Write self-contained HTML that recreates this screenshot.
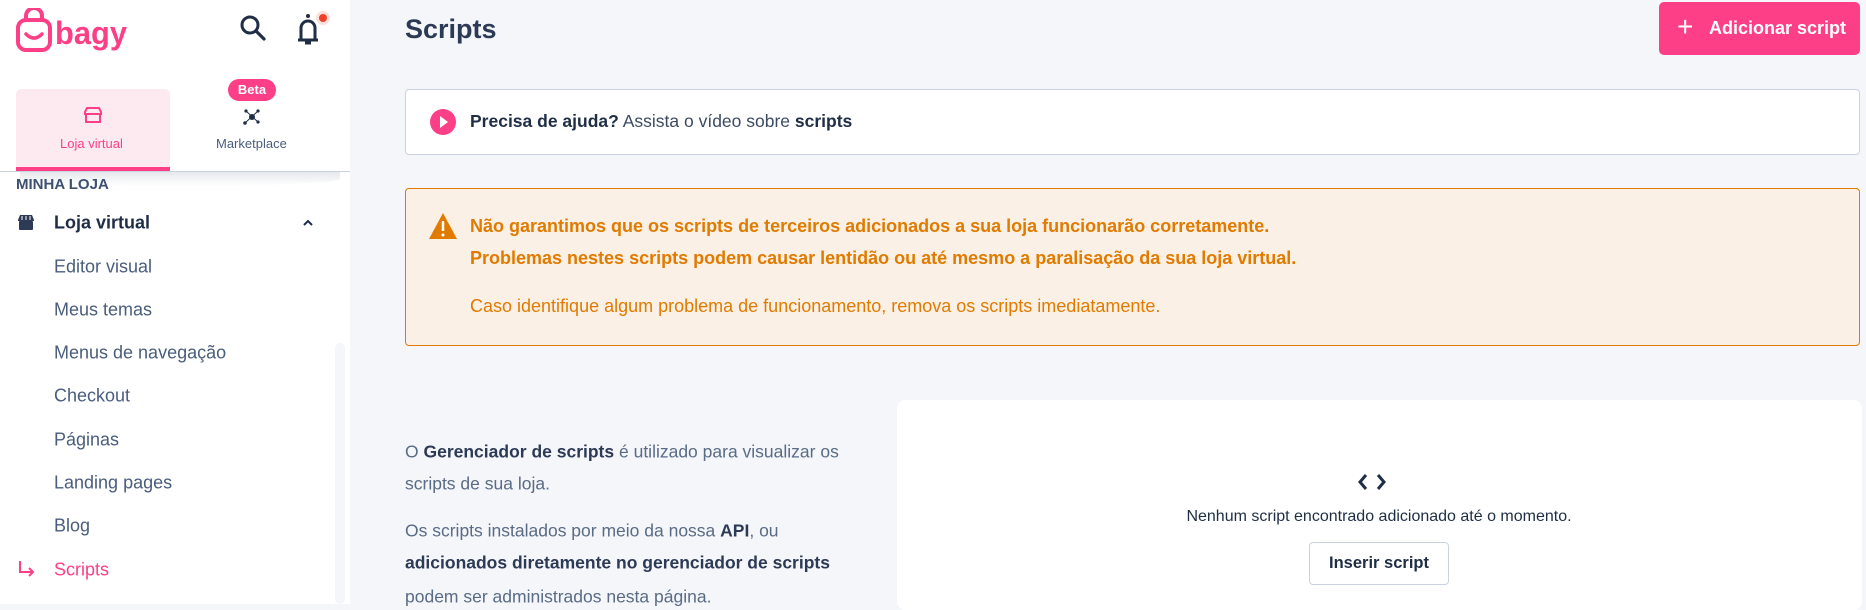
<!DOCTYPE html>
<html><head><meta charset="utf-8"><style>
*{margin:0;padding:0;box-sizing:border-box}
body{width:1866px;height:604px;overflow:hidden;background:#f4f6fa;font-family:"Liberation Sans",sans-serif;position:relative;color:#2d3a55}
.a{position:absolute;white-space:nowrap}
#side{position:absolute;left:0;top:0;width:350px;height:604px;background:#fff}
.item{position:absolute;left:54px;font-size:18px;color:#4a5d7c;transform:translateY(-50%)}
.lt{position:absolute;left:405px;font-size:17.5px;color:#5a6b85;transform:translateY(-50%);white-space:nowrap}
.lt b{color:#2d3a55;font-weight:600}
</style></head><body>
<div id="side">
  <svg class="a" style="left:16px;top:8px" width="115" height="46" viewBox="0 0 115 46">
    <rect x="2" y="12" width="32" height="30" rx="8" fill="none" stroke="#fc3f87" stroke-width="4"/>
    <path d="M10 12 V8 a8 8 0 0 1 16 0 V12" fill="none" stroke="#fc3f87" stroke-width="4"/>
    <path d="M10 26 q8 8 16 0" fill="none" stroke="#fc3f87" stroke-width="3.5" stroke-linecap="round"/>
    <text x="39" y="36" font-family="Liberation Sans" font-weight="bold" font-size="32" fill="#fc3f87" textLength="72" lengthAdjust="spacingAndGlyphs">bagy</text>
  </svg>
  <svg class="a" style="left:238px;top:13px" width="30" height="30" viewBox="0 0 30 30"><circle cx="12" cy="12" r="8" fill="none" stroke="#1f2d45" stroke-width="3"/><path d="M18 18 L26 26" stroke="#1f2d45" stroke-width="3.2" stroke-linecap="round"/></svg>
  <svg class="a" style="left:293px;top:10px" width="40" height="36" viewBox="0 0 40 36"><path d="M5 30 H25 M8 29 V18 a7 7 0 0 1 14 0 V29" fill="none" stroke="#1f2d45" stroke-width="3"/><path d="M12 33 h6" stroke="#1f2d45" stroke-width="3"/><circle cx="15" cy="6" r="2" fill="#1f2d45"/><circle cx="30" cy="8" r="7" fill="#fde0dc"/><circle cx="30" cy="8" r="4" fill="#f0412b"/></svg>
  <div class="a" style="left:16px;top:89px;width:154px;height:82px;background:#fdeaf1;border-radius:5px 5px 0 0;border-bottom:4px solid #fc3f87"></div>
  <svg class="a" style="left:83px;top:106px" width="20" height="18" viewBox="0 0 20 18"><path d="M2 6 L4 2 H16 L18 6 V8 H2 Z M3 8 V16 H17 V8" fill="none" stroke="#fc3f87" stroke-width="2"/></svg>
  <div class="a" style="left:60px;top:136px;font-size:13px;color:#fc3f87">Loja virtual</div>
  <div class="a" style="left:228px;top:79px;width:48px;height:22px;border-radius:11px;background:#fc3f87;color:#fff;font-size:13px;font-weight:bold;text-align:center;line-height:22px">Beta</div>
  <svg class="a" style="left:242px;top:107px" width="20" height="20" viewBox="0 0 20 20"><circle cx="10" cy="10" r="3" fill="#1f2d45"/><circle cx="4" cy="4" r="1.6" fill="#1f2d45"/><circle cx="16" cy="4" r="1.6" fill="#1f2d45"/><circle cx="3" cy="16" r="1.8" fill="#1f2d45"/><circle cx="16" cy="15" r="1.6" fill="#1f2d45"/><path d="M4 4L16 15M16 4L3 16" stroke="#1f2d45" stroke-width="1"/></svg>
  <div class="a" style="left:216px;top:136px;font-size:13px;color:#4a5d7c">Marketplace</div>
  <div class="a" style="left:0;top:171px;width:350px;height:1px;background:#c9d3e0"></div>
  <div class="a" style="left:20px;top:172px;width:320px;height:14px;background:linear-gradient(#e6e8ec,rgba(255,255,255,0));border-radius:0 0 50% 50%"></div>
  <div class="a" style="left:16px;top:176px;font-size:15px;font-weight:bold;color:#3d5070">MINHA LOJA</div>
  <svg class="a" style="left:17px;top:215px" width="18" height="15" viewBox="0 0 18 15"><path d="M1 5 L3 0 H15 L17 5 V6 H1 Z" fill="#2d3a55"/><rect x="2" y="6" width="14" height="9" rx="1" fill="#2d3a55"/><path d="M5 1v4M9 1v4M13 1v4" stroke="#fff" stroke-width="1"/></svg>
  <div class="item" style="top:223px;color:#1f2d45;font-weight:600">Loja virtual</div>
  <svg class="a" style="left:302px;top:219px" width="12" height="8" viewBox="0 0 12 8"><path d="M2 6 L6 2 L10 6" fill="none" stroke="#1f2d45" stroke-width="2"/></svg>
  <div class="item" style="top:267px">Editor visual</div>
  <div class="item" style="top:310px">Meus temas</div>
  <div class="item" style="top:353px">Menus de navegação</div>
  <div class="item" style="top:396px">Checkout</div>
  <div class="item" style="top:440px">Páginas</div>
  <div class="item" style="top:483px">Landing pages</div>
  <div class="item" style="top:526px">Blog</div>
  <svg class="a" style="left:18px;top:560px" width="18" height="18" viewBox="0 0 18 18"><path d="M2 1 V12 H15 M11 8 L15 12 L11 16" fill="none" stroke="#fc3f87" stroke-width="2"/></svg>
  <div class="item" style="top:570px;color:#fc3f87">Scripts</div>
  <div class="a" style="left:335px;top:343px;width:10px;height:261px;background:#f4f6fa;border-radius:5px"></div>
</div>

<div class="a" style="left:405px;top:14px;font-size:27px;font-weight:600;color:#2d3a55">Scripts</div>
<div class="a" style="left:1659px;top:2px;width:201px;height:53px;background:#fc3f87;border-radius:5px;color:#fff;font-size:18px;font-weight:bold;line-height:53px"><span style="font-size:28px;font-weight:normal;position:absolute;left:18px;top:-2px">+</span><span style="position:absolute;left:50px">Adicionar script</span></div>

<div class="a" style="left:405px;top:89px;width:1455px;height:66px;background:#fff;border:1px solid #c9d3e0;border-radius:4px"></div>
<svg class="a" style="left:429px;top:108px" width="28" height="28" viewBox="0 0 28 28"><circle cx="14" cy="14" r="13" fill="#fc3f87"/><path d="M11 8 L19 14 L11 20 Z" fill="#fff"/></svg>
<div class="a" style="left:470px;top:111px;font-size:17.5px;color:#3d4a63"><b style="color:#1f2d45;font-weight:600">Precisa de ajuda?</b> Assista o vídeo sobre <b style="color:#1f2d45;font-weight:600">scripts</b></div>

<div class="a" style="left:405px;top:188px;width:1455px;height:158px;background:#fbf0e6;border:1px solid #e07b00;border-radius:4px"></div>
<svg class="a" style="left:428px;top:212px" width="30" height="28" viewBox="0 0 30 28"><path d="M15 1 L29 27 H1 Z" fill="#e07b00"/><path d="M15 9 V19" stroke="#fff" stroke-width="2.5"/><circle cx="15" cy="23" r="1.5" fill="#fff"/></svg>
<div class="a" style="left:470px;top:216px;font-size:18px;font-weight:600;color:#e07b00">Não garantimos que os scripts de terceiros adicionados a sua loja funcionarão corretamente.</div>
<div class="a" style="left:470px;top:248px;font-size:18px;font-weight:600;color:#e07b00">Problemas nestes scripts podem causar lentidão ou até mesmo a paralisação da sua loja virtual.</div>
<div class="a" style="left:470px;top:296px;font-size:18px;color:#e07b00">Caso identifique algum problema de funcionamento, remova os scripts imediatamente.</div>

<div class="lt" style="top:452px">O <b>Gerenciador de scripts</b> é utilizado para visualizar os</div>
<div class="lt" style="top:484px">scripts de sua loja.</div>
<div class="lt" style="top:531px">Os scripts instalados por meio da nossa <b>API</b>, ou</div>
<div class="lt" style="top:563px"><b>adicionados diretamente no gerenciador de scripts</b></div>
<div class="lt" style="top:597px">podem ser administrados nesta página.</div>

<div class="a" style="left:897px;top:400px;width:965px;height:210px;background:#fff;border-radius:8px"></div>
<svg class="a" style="left:1357px;top:473px" width="30" height="18" viewBox="0 0 30 18"><path d="M9 2 L3 9 L9 16 M21 2 L27 9 L21 16" fill="none" stroke="#1f2d45" stroke-width="3"/></svg>
<div class="a" style="left:1379px;top:517px;transform:translate(-50%,-50%);font-size:16px;color:#1f2d45">Nenhum script encontrado adicionado até o momento.</div>
<div class="a" style="left:1309px;top:542px;width:140px;height:43px;border:1px solid #c9d3e0;border-radius:4px;background:#fff;text-align:center;line-height:41px;font-size:16.5px;color:#1f2d45;font-weight:600">Inserir script</div>
</body></html>
